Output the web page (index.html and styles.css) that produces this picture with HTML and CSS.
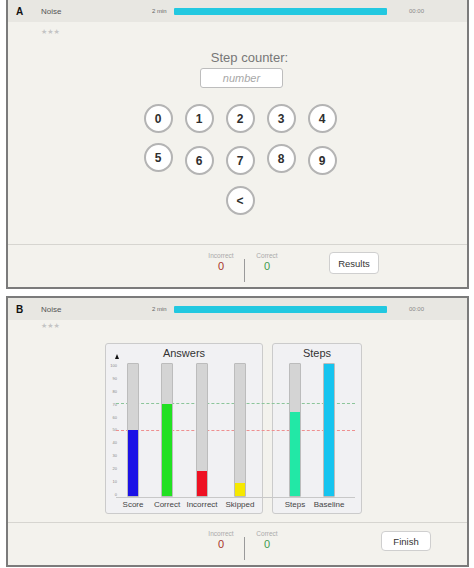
FILE: index.html
```html
<!DOCTYPE html>
<html>
<head>
    <title>Noise - Step counter</title>
    <link rel="stylesheet" href="styles.css">
</head>
<body>
<div class="figure">

    <!-- Экран ввода -->
    <section class="panel panel-a">
        <header class="task-bar">
            <span class="panel-label">A</span>
            <span class="task-name">Noise</span>
            <span class="task-time">2 min</span>
            <span class="progress"></span>
            <span class="clock">00:00</span>
        </header>
        <div class="task-body">
            <div class="stars">★★★</div>
            <div class="counter">
                <p class="counter-title">Step counter:</p>
                <input class="counter-input" type="text" placeholder="number">
                <div class="keypad">
                    <div class="key-row">
                        <button class="key">0</button>
                        <button class="key">1</button>
                        <button class="key">2</button>
                        <button class="key">3</button>
                        <button class="key">4</button>
                    </div>
                    <div class="key-row row-2">
                        <button class="key lift">5</button>
                        <button class="key">6</button>
                        <button class="key">7</button>
                        <button class="key lift-sm">8</button>
                        <button class="key">9</button>
                    </div>
                    <div class="key-row row-3">
                        <button class="key">&lt;</button>
                    </div>
                </div>
            </div>
        </div>
        <footer class="task-foot">
            <div class="tally tally-bad">
                <span class="tally-label">Incorrect</span>
                <span class="tally-value">0</span>
            </div>
            <span class="tally-rule"></span>
            <div class="tally tally-good">
                <span class="tally-label">Correct</span>
                <span class="tally-value">0</span>
            </div>
            <button class="foot-btn">Results</button>
        </footer>
    </section>

    <!-- Экран результатов -->
    <section class="panel panel-b">
        <header class="task-bar">
            <span class="panel-label">B</span>
            <span class="task-name">Noise</span>
            <span class="task-time">2 min</span>
            <span class="progress"></span>
            <span class="clock">00:00</span>
        </header>
        <div class="task-body">
            <div class="stars">★★★</div>
            <div class="chart">
                <div class="chart-card card-answers">
                    <div class="card-title">Answers</div>
                    <div class="card-plot">
                        <div class="axis">
                            <span>100</span><span>90</span><span>80</span><span>70</span><span>60</span>
                            <span>50</span><span>40</span><span>30</span><span>20</span><span>10</span><span>0</span>
                        </div>
                        <div class="col">
                            <div class="bar"><div class="bar-fill fill-score" style="height: 50%"></div></div>
                            <span class="bar-label">Score</span>
                        </div>
                        <div class="col">
                            <div class="bar"><div class="bar-fill fill-correct" style="height: 70%"></div></div>
                            <span class="bar-label">Correct</span>
                        </div>
                        <div class="col">
                            <div class="bar"><div class="bar-fill fill-incorrect" style="height: 19%"></div></div>
                            <span class="bar-label">Incorrect</span>
                        </div>
                        <div class="col">
                            <div class="bar"><div class="bar-fill fill-skipped" style="height: 10%"></div></div>
                            <span class="bar-label">Skipped</span>
                        </div>
                    </div>
                </div>
                <div class="chart-card card-steps">
                    <div class="card-title">Steps</div>
                    <div class="card-plot">
                        <div class="col">
                            <div class="bar"><div class="bar-fill fill-steps" style="height: 64%"></div></div>
                            <span class="bar-label">Steps</span>
                        </div>
                        <div class="col">
                            <div class="bar"><div class="bar-fill fill-baseline" style="height: 100%"></div></div>
                            <span class="bar-label">Baseline</span>
                        </div>
                    </div>
                </div>
                <!-- уровни 70 / 50 и нулевая линия -->
                <span class="guide guide-target"></span>
                <span class="guide guide-half"></span>
                <span class="guide guide-base"></span>
            </div>
        </div>
        <footer class="task-foot">
            <div class="tally tally-bad">
                <span class="tally-label">Incorrect</span>
                <span class="tally-value">0</span>
            </div>
            <span class="tally-rule"></span>
            <div class="tally tally-good">
                <span class="tally-label">Correct</span>
                <span class="tally-value">0</span>
            </div>
            <button class="foot-btn">Finish</button>
        </footer>
    </section>

</div>
</body>
</html>
```

FILE: styles.css
```css
body {
    margin: 0;
    background: #fff;
    font-family: "Liberation Sans", Arial, sans-serif;
}
.figure {
    padding: 0 5px 0 6px;
}
.panel {
    box-sizing: border-box;
    display: flex;
    flex-direction: column;
    border: 2px solid #7b7b7b;
    background: #f3f2ed;
}
.panel-a {
    height: 291px;
    margin-top: -2px;
}
.panel-b {
    height: 271px;
    margin-top: 7px;
}

/* верхняя полоса */
.task-bar {
    flex: none;
    height: 22px;
    display: flex;
    align-items: center;
    padding-left: 8px;
    background: #e8e7e2;
}
.panel-label {
    width: 25px;
    font-size: 10px;
    font-weight: bold;
    color: #111;
}
.task-name {
    width: 111px;
    font-size: 8px;
    color: #555;
}
.task-time {
    width: 22px;
    font-size: 6px;
    color: #666;
}
.progress {
    width: 213px;
    height: 7px;
    background: #22c8e0;
    border-radius: 1px;
}
.clock {
    margin-left: 22px;
    font-size: 6px;
    color: #888;
}

.task-body {
    flex: 1;
}
.stars {
    margin: 6px 0 0 33px;
    font-family: "DejaVu Sans", sans-serif;
    font-size: 7px;
    line-height: 8px;
    color: #c4c4c4;
}
.panel-b .stars {
    margin-top: 2px;
}

/* счётчик шагов */
.counter {
    display: flex;
    flex-direction: column;
    align-items: center;
}
.counter-title {
    margin: 14px 0 0 24px;
    font-size: 13px;
    line-height: 16px;
    color: #777;
}
.counter-input {
    box-sizing: border-box;
    width: 83px;
    height: 20px;
    margin: 2px 0 0 8px;
    padding: 0;
    border: 1px solid #bdbdbd;
    border-radius: 3px;
    background: #fff;
    font: italic 11px "Liberation Sans", Arial, sans-serif;
    text-align: center;
}
.counter-input::placeholder {
    color: #a8a8a8;
}
.keypad {
    margin: 16px 0 0 5px;
    display: flex;
    flex-direction: column;
    align-items: center;
}
.key-row {
    display: flex;
    align-items: flex-start;
    gap: 12px;
}
.row-2 {
    margin-top: 13px;
}
.row-3 {
    margin-top: 11px;
}
.key {
    box-sizing: border-box;
    width: 29px;
    height: 29px;
    padding: 0;
    border: 2px solid #b4b4b4;
    border-radius: 50%;
    background: #fff;
    font: bold 12px "Liberation Sans", Arial, sans-serif;
    color: #2e2e2e;
}
.key.lift {
    margin-top: -3px;
}
.key.lift-sm {
    margin-top: -2px;
}

/* нижняя полоса */
.task-foot {
    flex: none;
    box-sizing: border-box;
    height: 43px;
    display: flex;
    align-items: flex-start;
    padding-left: 193px;
    border-top: 1px solid #d6d5d0;
}
.tally {
    width: 40px;
    padding-top: 7px;
    display: flex;
    flex-direction: column;
    align-items: center;
}
.tally-good {
    width: 38px;
}
.tally-label {
    font-size: 6.5px;
    line-height: 8px;
    color: #aaa;
}
.tally-value {
    font-size: 11px;
    line-height: 13px;
}
.tally-bad .tally-value {
    color: #a8342a;
}
.tally-good .tally-value {
    color: #3f9b4f;
}
.tally-rule {
    width: 1px;
    height: 23px;
    margin: 14px 3px 0;
    background: #9a9a9a;
}
.foot-btn {
    width: 50px;
    height: 22px;
    margin: 7px 0 0 43px;
    padding: 0;
    border: 1px solid #cfcfcf;
    border-radius: 4px;
    background: #fff;
    font: 9.5px "Liberation Sans", Arial, sans-serif;
    color: #333;
}
.panel-b .foot-btn {
    height: 20px;
    margin: 8px 0 0 95px;
}

/* графики */
.chart {
    position: relative;
    display: flex;
    gap: 9px;
    margin: 13px 0 0 97px;
}
.chart-card {
    box-sizing: border-box;
    height: 171px;
    padding-top: 2px;
    border: 1px solid #cbcbcb;
    border-radius: 3px;
    background: #f1f1f3;
}
.card-answers {
    width: 158px;
}
.card-steps {
    width: 90px;
}
.card-title {
    font-size: 11px;
    line-height: 14px;
    text-align: center;
    color: #333;
}
.card-plot {
    display: grid;
    margin-top: 3px;
}
.card-answers .card-plot {
    grid-template-columns: 11px 32px 36px 34px 42px;
}
.card-steps .card-plot {
    grid-template-columns: 34px 34px;
    padding-left: 5px;
}
.axis {
    position: relative;
    height: 134px;
    display: flex;
    flex-direction: column;
    justify-content: space-between;
    align-items: flex-end;
    font-size: 4px;
    line-height: 5px;
    color: #888;
}
.axis::before {
    content: "";
    position: absolute;
    top: -9px;
    right: -2px;
    border: 2px solid transparent;
    border-bottom: 5px solid #111;
    border-top: 0;
}
.col {
    display: flex;
    flex-direction: column;
    align-items: center;
}
.bar {
    position: relative;
    z-index: 2;
    box-sizing: border-box;
    width: 12px;
    height: 134px;
    display: flex;
    flex-direction: column;
    justify-content: flex-end;
    border: 1px solid #bcbcbc;
    border-radius: 1px;
    background: #d4d4d4;
}
.bar-fill {
    flex: none;
}
.fill-score { background: #1c12e6; }
.fill-correct { background: #22e022; }
.fill-incorrect { background: #ee1122; }
.fill-skipped { background: #f6e800; }
.fill-steps { background: #22e8a6; }
.fill-baseline { background: #16c4ef; }
.bar-label {
    margin-top: 3px;
    font-size: 8px;
    line-height: 10px;
    color: #444;
    white-space: nowrap;
}
.guide {
    position: absolute;
    z-index: 1;
    left: 11px;
    width: 239px;
    height: 0;
    border-top: 1px dashed;
}
.guide-target {
    top: 60px;
    border-color: #8cc59a;
}
.guide-half {
    top: 87px;
    border-color: #ee8f8f;
}
.guide-base {
    top: 154px;
    border-top-style: solid;
    border-color: #c8c8c8;
}
```
